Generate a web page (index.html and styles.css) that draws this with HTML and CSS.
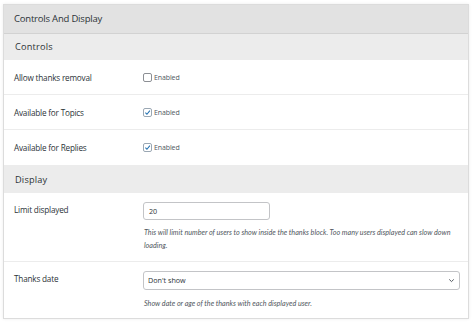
FILE: index.html
```html
<!DOCTYPE html>
<html>
<head>
<meta charset="utf-8">
<title>Controls And Display</title>
<link rel="stylesheet" href="styles.css">
</head>
<body>
<div class="panel">
  <div class="panel-title">Controls And Display</div>

  <div class="section-title">Controls</div>
  <div class="row">
    <div class="label">Allow thanks removal</div>
    <div class="field"><label class="check"><span class="box"></span>Enabled</label></div>
  </div>
  <div class="row">
    <div class="label">Available for Topics</div>
    <div class="field"><label class="check"><span class="box on"><svg viewBox="0 0 10 10"><path d="M2 5.2 L4.2 7.6 L8.4 2.4"/></svg></span>Enabled</label></div>
  </div>
  <div class="row tall">
    <div class="label">Available for Replies</div>
    <div class="field"><label class="check"><span class="box on"><svg viewBox="0 0 10 10"><path d="M2 5.2 L4.2 7.6 L8.4 2.4"/></svg></span>Enabled</label></div>
  </div>

  <div class="section-title display">Display</div>
  <div class="row top">
    <div class="label">Limit displayed</div>
    <div class="field">
      <div class="input">20</div>
      <p class="help">This will limit number of users to show inside the thanks block. Too many users displayed can slow down loading.</p>
    </div>
  </div>
  <div class="row top last">
    <div class="label">Thanks date</div>
    <div class="field">
      <div class="select">Don't show<svg viewBox="0 0 10 10"><path d="M2.5 3.8 L5 6.2 L7.5 3.8"/></svg></div>
      <p class="help">Show date or age of the thanks with each displayed user.</p>
    </div>
  </div>
</div>
</body>
</html>
```

FILE: styles.css
```css
/* Settings panel */

body
{ margin: 0;
padding: 4px 5px 4px 3px;
background: #fff;
font-family: "Open Sans", "Lato", sans-serif;
color: #32373c;
}

.panel
{ border: 1px solid #dcdcdc;
box-shadow: 0 0 3px rgba(0,0,0,0.08);
background: #fff;
}

.panel-title
{ height: 28px;
line-height: 28px;
padding-left: 10px;
background: #e2e2e2;
border-bottom: 1px solid #d2d2d2;
font-size: 9.5px;
letter-spacing: -0.2px;
color: #2c3338;
}

.section-title
{ height: 26px;
line-height: 26px;
padding-left: 11px;
background: #ececec;
font-size: 9.2px;
letter-spacing: 0.2px;
color: #2c3338;
}

.section-title.display
{ height: 27px;
line-height: 27px;
}

.row
{ display: grid;
grid-template-columns: 129px 1fr;
align-items: center;
padding: 0 8px 0 10px;
height: 34px;
border-bottom: 1px solid #ececec;
}

.row.tall
{ height: 35px;
}

.row.top
{ align-items: start;
height: auto;
padding-top: 9px;
padding-bottom: 9px;
}

.row.last
{ border-bottom: none;
padding-bottom: 8px;
}

.row.top .label
{ padding-top: 2px;
}

.label
{ font-size: 8.2px;
letter-spacing: -0.2px;
color: #2c3338;
}

.check
{ display: flex;
align-items: center;
gap: 2px;
font-size: 7px;
letter-spacing: -0.1px;
color: #50575e;
}

.box
{ width: 7px;
height: 7px;
border: 1px solid #8c8f94;
border-radius: 2px;
background: #fff;
display: flex;
}

.box.on
{ border-color: #9aa7b3;
}

.box svg
{ width: 7px;
height: 7px;
}

.box path
{ fill: none;
stroke: #2271b1;
stroke-width: 1.5;
}

.input
{ width: 120px;
height: 16px;
line-height: 16px;
border: 1px solid #c3c4c7;
border-radius: 3px;
padding-left: 5px;
font-size: 7.2px;
color: #2c3338;
}

.select
{ height: 17px;
line-height: 17px;
border: 1px solid #c3c4c7;
border-radius: 3px;
padding-left: 4px;
font-size: 7.2px;
color: #2c3338;
display: flex;
justify-content: space-between;
align-items: center;
}

.select svg
{ width: 9px;
height: 9px;
margin-right: 3px;
}

.select path
{ fill: none;
stroke: #50575e;
stroke-width: 1.1;
}

.help
{ margin: 6px 0 0 1px;
font-family: "Lato", "Open Sans", sans-serif;
font-size: 7.2px;
font-style: italic;
line-height: 13px;
color: #50575e;
}

.row.last .help
{ margin-top: 7px;
}
```
